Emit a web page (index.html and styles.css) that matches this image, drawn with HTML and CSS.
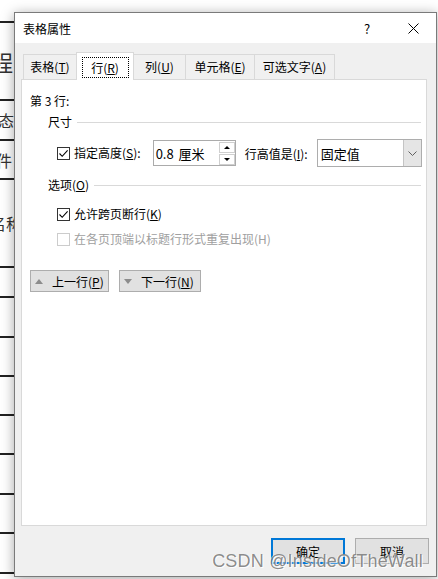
FILE: index.html
```html
<!DOCTYPE html>
<html lang="zh-CN">
<head>
    <meta charset="UTF-8">
    <meta name="viewport" content="width=device-width, initial-scale=1.0">
    <title>表格属性</title>
    <link rel="stylesheet" href="styles.css">
</head>
<body>
    <div class="desk">
        <!-- 背景里的文档表格 -->
        <div class="doc">
            <div class="doc-row" style="height:23px"></div>
            <div class="doc-row" style="height:78px"><span class="doc-big">程</span></div>
            <div class="doc-row" style="height:40px"><span class="doc-txt t1">态</span></div>
            <div class="doc-row" style="height:39px"><span class="doc-txt t2">件</span></div>
            <div class="doc-row" style="height:88px"><span class="doc-txt t3">名称</span></div>
            <div class="doc-row" style="height:30px"></div>
            <div class="doc-row" style="height:40px"></div>
            <div class="doc-row" style="height:39px"></div>
            <div class="doc-row" style="height:39px"></div>
            <div class="doc-row" style="height:39px"></div>
            <div class="doc-row" style="height:40px"></div>
            <div class="doc-row" style="height:39px"></div>
            <div class="doc-row" style="height:40px"></div>
        </div>

        <!-- 对话框 -->
        <div class="dialog">
            <div class="titlebar">
                <span class="title">表格属性</span>
                <span class="tb-btn help">?</span>
                <span class="tb-btn">
                    <svg width="11" height="11" viewBox="0 0 11 11"><path d="M0.5 0.5L10.5 10.5M10.5 0.5L0.5 10.5" stroke="#000" stroke-width="1" fill="none"/></svg>
                </span>
            </div>

            <div class="tabs">
                <span class="tab tab-table">表格(<u>T</u>)</span>
                <span class="tab tab-row active"><span class="focus">行(<u>R</u>)</span></span>
                <span class="tab tab-col">列(<u>U</u>)</span>
                <span class="tab tab-cell">单元格(<u>E</u>)</span>
                <span class="tab tab-alt">可选文字(<u>A</u>)</span>
            </div>

            <div class="panel">
                <div class="row-title">第 3 行:</div>

                <div class="section-head">
                    <span>尺寸</span>
                    <span class="rule"></span>
                </div>
                <div class="size-row">
                    <label class="check">
                        <span class="box">
                            <svg width="11" height="11" viewBox="0 0 11 11"><path d="M1.5 5.5L4.2 8.3L9.6 2.4" stroke="#000" stroke-width="1.1" fill="none"/></svg>
                        </span>
                        <span>指定高度(<u>S</u>):</span>
                    </label>
                    <div class="num">
                        <span class="num-val">0.8 厘米</span>
                        <span class="spin">
                            <span class="spin-btn"><span class="tri-up small"></span></span>
                            <span class="spin-btn"><span class="tri-down small"></span></span>
                        </span>
                    </div>
                    <span class="label2">行高值是(<u>I</u>):</span>
                    <div class="select">
                        <span>固定值</span>
                        <span class="drop">
                            <svg width="9" height="5" viewBox="0 0 9 5"><path d="M0.5 0.5L4.5 4.5L8.5 0.5" stroke="#606060" stroke-width="1" fill="none"/></svg>
                        </span>
                    </div>
                </div>

                <div class="section-head opt">
                    <span>选项(<u>O</u>)</span>
                    <span class="rule"></span>
                </div>
                <label class="check opt-row">
                    <span class="box">
                        <svg width="11" height="11" viewBox="0 0 11 11"><path d="M1.5 5.5L4.2 8.3L9.6 2.4" stroke="#000" stroke-width="1.1" fill="none"/></svg>
                    </span>
                    <span>允许跨页断行(<u>K</u>)</span>
                </label>
                <label class="check opt-row disabled">
                    <span class="box"></span>
                    <span>在各页顶端以标题行形式重复出现(H)</span>
                </label>

                <div class="nav-row">
                    <span class="nav-btn prev"><span class="tri-up"></span><span>上一行(<u>P</u>)</span></span>
                    <span class="nav-btn next"><span class="tri-down"></span><span>下一行(<u>N</u>)</span></span>
                </div>
            </div>

            <div class="footer">
                <span class="btn primary">确定</span>
                <span class="btn">取消</span>
            </div>

            <div class="watermark">CSDN @InsideOfTheWall</div>
        </div>
    </div>
</body>
</html>
```

FILE: styles.css
```css
body {
    margin: 0;
    font-family: "Noto Sans CJK SC", sans-serif;
    font-size: 12px;
    color: #000;
}

u {
    text-underline-offset: 1px;
}

.desk {
    display: grid;
    width: 438px;
    height: 579px;
    overflow: hidden;
    background: #fff;
}

.doc,
.dialog {
    grid-area: 1 / 1;
}

/* 背景文档 */
.doc {
    width: 60px;
}

.doc-row {
    box-sizing: border-box;
    display: flex;
    align-items: center;
    border-bottom: 2px solid #222;
    overflow: hidden;
}

.doc-big {
    margin-left: -9px;
    font-size: 22px;
    color: #333;
}

.doc-txt {
    font-size: 16px;
    color: #333;
}

.doc-txt.t1 {
    margin-left: -2px;
}

.doc-txt.t2 {
    margin-left: -4px;
}

.doc-txt.t3 {
    margin-left: -10px;
}

/* 对话框 */
.dialog {
    position: relative;
    align-self: start;
    justify-self: start;
    box-sizing: border-box;
    margin: 12px 0 0 14px;
    width: 423px;
    height: 565px;
    background: #f0f0f0;
    border: 1px solid #7a7a7a;
    box-shadow: 0 2px 12px rgba(0, 0, 0, 0.35);
}

.titlebar {
    display: flex;
    align-items: center;
    height: 30px;
    padding-left: 8px;
    background: #fff;
}

.title {
    flex: 1;
}

.tb-btn {
    display: flex;
    align-items: center;
    justify-content: center;
    width: 46px;
    height: 30px;
}

.tb-btn.help {
    font-size: 13px;
}

.tabs {
    display: flex;
    align-items: flex-end;
    height: 27px;
    margin: 9px 0 0 9px;
    white-space: nowrap;
}

.tab {
    box-sizing: border-box;
    height: 25px;
    margin-left: -1px;
    line-height: 24px;
    text-align: center;
    background: #f0f0f0;
    border: 1px solid #d9d9d9;
    border-bottom: 0;
}

.tab-table { width: 54px; }
.tab-row   { width: 58px; }
.tab-col   { width: 53px; }
.tab-cell  { width: 70px; }
.tab-alt   { width: 81px; }

.tab.active {
    position: relative;
    z-index: 1;
    display: flex;
    justify-content: center;
    height: 28px;
    margin-bottom: -1px;
    padding-top: 4px;
    background: #fff;
}

.tab .focus {
    display: block;
    width: 47px;
    box-sizing: border-box;
    height: 21px;
    line-height: 19px;
    border: 1px dotted #000;
}

.panel {
    box-sizing: border-box;
    margin-left: 6px;
    width: 406px;
    height: 447px;
    padding: 13px 5px 0 8px;
    background: #fff;
    border: 1px solid #d9d9d9;
}

.row-title {
    line-height: 16px;
}

.section-head {
    display: flex;
    align-items: center;
    gap: 5px;
    margin: 5px 0 0 18px;
    line-height: 16px;
}

.section-head.opt {
    margin-top: 10px;
}

.rule {
    flex: 1;
    border-top: 1px solid #d9d9d9;
}

.size-row {
    display: flex;
    align-items: center;
    height: 28px;
    margin: 9px 0 0 27px;
    white-space: nowrap;
}

.size-row > * {
    flex-shrink: 0;
}

.check {
    display: flex;
    align-items: center;
    gap: 4px;
    line-height: 16px;
    white-space: nowrap;
}

.box {
    box-sizing: border-box;
    display: flex;
    align-items: center;
    justify-content: center;
    width: 13px;
    height: 13px;
    background: #fff;
    border: 1px solid #333;
}

.opt-row {
    margin: 13px 0 0 27px;
}

.opt-row.disabled {
    margin-top: 9px;
    color: #a0a0a0;
}

.opt-row.disabled .box {
    border-color: #cccccc;
}

.num {
    box-sizing: border-box;
    display: flex;
    align-items: center;
    justify-content: space-between;
    margin-left: 12px;
    width: 83px;
    height: 26px;
    padding-left: 2px;
    background: #fff;
    border: 1px solid #ababab;
}

.num-val {
    font-size: 13px;
    word-spacing: 2px;
}

.spin {
    display: flex;
    flex-direction: column;
    gap: 1px;
}

.spin-btn {
    box-sizing: border-box;
    display: flex;
    align-items: center;
    justify-content: center;
    width: 16px;
    height: 11px;
    background: #fff;
    border: 1px solid #cfcfcf;
}

.tri-up,
.tri-down {
    width: 0;
    height: 0;
    border-left: 4px solid transparent;
    border-right: 4px solid transparent;
}

.tri-up {
    border-bottom: 5px solid #8c8c8c;
}

.tri-down {
    border-top: 5px solid #8c8c8c;
}

.tri-up.small {
    border-left-width: 3px;
    border-right-width: 3px;
    border-bottom: 3px solid #000;
}

.tri-down.small {
    border-left-width: 3px;
    border-right-width: 3px;
    border-top: 3px solid #000;
}

.label2 {
    margin-left: 9px;
}

.select {
    box-sizing: border-box;
    display: flex;
    align-items: center;
    justify-content: space-between;
    margin-left: 9px;
    width: 105px;
    height: 28px;
    padding-left: 3px;
    font-size: 13px;
    background: #fff;
    border: 1px solid #adadad;
}

.drop {
    display: flex;
    align-items: center;
    justify-content: center;
    width: 17px;
    height: 100%;
    background: #e5e5e5;
    border-left: 1px solid #c4c4c4;
}

.nav-row {
    display: flex;
    gap: 10px;
    margin-top: 23px;
    white-space: nowrap;
}

.nav-btn {
    box-sizing: border-box;
    display: flex;
    align-items: center;
    gap: 9px;
    height: 22px;
    padding-left: 4px;
    background: #e1e1e1;
    border: 1px solid #adadad;
}

.nav-btn.prev {
    width: 79px;
}

.nav-btn.next {
    width: 82px;
}

.footer {
    display: flex;
    justify-content: flex-end;
    gap: 10px;
    padding: 12px 7px 0 0;
}

.btn {
    box-sizing: border-box;
    display: flex;
    align-items: center;
    justify-content: center;
    width: 74px;
    height: 26px;
    background: #e1e1e1;
    border: 1px solid #adadad;
}

.btn.primary {
    border: 2px solid #0078d7;
}

.watermark {
    position: absolute;
    right: 13px;
    bottom: 5px;
    font-family: "Liberation Sans", sans-serif;
    font-size: 18px;
    line-height: 20px;
    letter-spacing: 0.2px;
    color: rgba(120, 120, 120, 0.85);
    text-shadow: 1px 1px 0 rgba(255, 255, 255, 0.9), -1px 0 0 rgba(255, 255, 255, 0.6);
    white-space: nowrap;
}
```
